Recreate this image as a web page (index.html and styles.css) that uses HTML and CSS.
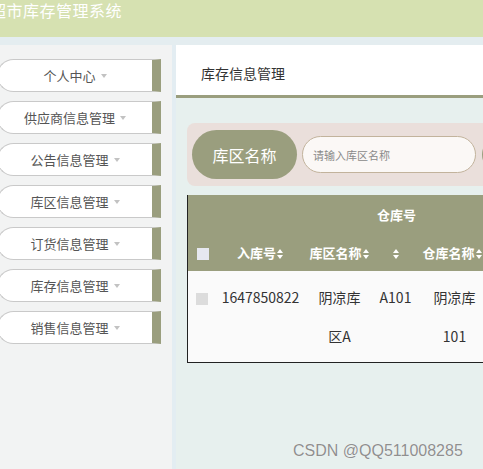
FILE: index.html
```html
<!DOCTYPE html>
<html lang="zh">
<head>
<meta charset="utf-8">
<title>超市库存管理系统</title>
<link rel="stylesheet" href="styles.css">
</head>
<body>
<header class="topbar"><span class="title">超市库存管理系统</span></header>
<div class="strip"></div>
<div class="main">
  <nav class="sidebar">
    <div class="nav-item"><span>个人中心</span><i class="caret"></i></div>
    <div class="nav-item"><span>供应商信息管理</span><i class="caret"></i></div>
    <div class="nav-item"><span>公告信息管理</span><i class="caret"></i></div>
    <div class="nav-item"><span>库区信息管理</span><i class="caret"></i></div>
    <div class="nav-item"><span>订货信息管理</span><i class="caret"></i></div>
    <div class="nav-item"><span>库存信息管理</span><i class="caret"></i></div>
    <div class="nav-item"><span>销售信息管理</span><i class="caret"></i></div>
  </nav>
  <div class="divider"></div>
  <section class="content">
    <div class="pagehead">库存信息管理</div>
    <div class="search">
      <div class="search-label">库区名称</div>
      <div class="search-input">请输入库区名称</div>
      <div class="search-next"></div>
    </div>
    <table class="grid">
      <colgroup>
        <col class="c0"><col class="c1"><col class="c2"><col class="c3"><col class="c4">
      </colgroup>
      <thead>
        <tr class="group"><th colspan="5"><span class="group-title">仓库号</span></th></tr>
        <tr class="cols">
          <th><span class="hcheck"></span></th>
          <th>入库号<i class="sort"></i></th>
          <th>库区名称<i class="sort"></i></th>
          <th><i class="sort"></i></th>
          <th class="left">仓库名称<i class="sort"></i></th>
        </tr>
      </thead>
      <tbody>
        <tr>
          <td><span class="dcheck"></span></td>
          <td>1647850822</td>
          <td><span class="wrap">阴凉库区A</span></td>
          <td>A101</td>
          <td><span class="wrap">阴凉库 101</span></td>
        </tr>
      </tbody>
    </table>
  </section>
</div>
<div class="watermark">CSDN @QQ511008285</div>
</body>
</html>
```
FILE: styles.css
```css
html, body {
  margin: 0;
  padding: 0;
}
body {
  width: 483px;
  height: 469px;
  overflow: hidden;
  position: relative;
  background: #e7f0ee;
  font-family: "Noto Sans CJK SC", "Noto Sans", sans-serif;
}
.topbar {
  height: 37px;
  background: #d6e1b1;
  overflow: hidden;
}
.title {
  display: block;
  margin-left: -10px;
  line-height: 20px;
  font-size: 16px;
  letter-spacing: 0.5px;
  color: #ffffff;
  white-space: nowrap;
}
.strip {
  height: 8px;
  background: #e4edf0;
}
.main {
  display: flex;
  height: 424px;
}
.sidebar {
  width: 172px;
  flex: none;
  background: #f2f3f3;
  padding-top: 14px;
  display: flex;
  flex-direction: column;
  gap: 9px;
  box-sizing: border-box;
}
.nav-item {
  height: 33px;
  box-sizing: border-box;
  margin-left: -3px;
  width: 164px;
  background: #ffffff;
  border: 1px solid #c9c9c9;
  border-right: 9px solid #9a9e7e;
  border-radius: 17px 0 0 17px;
  display: flex;
  align-items: center;
  justify-content: center;
  font-size: 13px;
  color: #555;
}
.caret {
  display: inline-block;
  margin-left: 5px;
  width: 0;
  height: 0;
  border-left: 3px solid transparent;
  border-right: 3px solid transparent;
  border-top: 4px solid #c2c2c2;
}
.divider {
  width: 4px;
  flex: none;
  background: #e3edf2;
}
.content {
  flex: 1;
  min-width: 0;
  overflow: hidden;
}
.pagehead {
  height: 53px;
  background: #ffffff;
  border-bottom: 3px solid #9a9e7e;
  padding-left: 25px;
  padding-top: 5px;
  box-sizing: border-box;
  display: flex;
  align-items: center;
  font-size: 14px;
  color: #333;
}
.search {
  margin: 25px 0 0 11px;
  height: 63px;
  background: #eadfdb;
  border-radius: 8px 0 0 8px;
  display: flex;
  align-items: center;
  padding-left: 5px;
  box-sizing: border-box;
  width: 320px;
}
.search-label {
  width: 105px;
  height: 49px;
  flex: none;
  border-radius: 25px;
  background: #9a9e7e;
  color: #ffffff;
  font-size: 16px;
  display: flex;
  align-items: center;
  justify-content: center;
}
.search-input {
  margin-left: 5px;
  width: 174px;
  height: 37px;
  flex: none;
  box-sizing: border-box;
  border: 1px solid #c2b39c;
  border-radius: 19px;
  background: #fbf8f6;
  color: #8a8a8a;
  font-size: 11px;
  padding-left: 10px;
  display: flex;
  align-items: center;
}
.search-next {
  margin-left: 6px;
  width: 20px;
  height: 37px;
  flex: none;
  border-radius: 19px 0 0 19px;
  background: #9a9e7e;
}
.grid {
  margin: 9px 0 0 11px;
  table-layout: fixed;
  border-collapse: collapse;
  width: 330px;
  background: #fafafa;
  border-left: 1px solid #222;
  border-bottom: 1px solid #222;
}
.c0 { width: 28px; }
.c1 { width: 90px; }
.c2 { width: 68px; }
.c3 { width: 44px; }
.c4 { width: 100px; }
.grid thead {
  background: #9a9e7e;
  color: #ffffff;
}
.grid th {
  height: 38px;
  padding: 0;
  font-size: 13px;
  font-weight: bold;
  text-align: center;
  white-space: nowrap;
}
.grid th.left {
  text-align: left;
  padding-left: 5px;
}
.group th {
  text-align: left;
}
.group-title {
  padding-left: 189px;
}
.sort {
  display: inline-block;
  position: relative;
  width: 7px;
  height: 10px;
  margin-left: 1px;
  vertical-align: -1px;
}
.sort::before, .sort::after {
  content: "";
  position: absolute;
  left: 0;
  border-left: 3.5px solid transparent;
  border-right: 3.5px solid transparent;
}
.sort::before {
  top: 0;
  border-bottom: 4px solid #ffffff;
}
.sort::after {
  bottom: 0;
  border-top: 4px solid #ffffff;
}
.hcheck, .dcheck {
  display: inline-block;
  width: 12px;
  height: 12px;
  vertical-align: middle;
}
.hcheck {
  background: #e6e8f0;
  margin-left: 2px;
}
.dcheck {
  background: #dcdcdc;
}
.grid td {
  padding: 7px 0 6px;
  font-size: 14px;
  line-height: 39px;
  color: #333;
  text-align: center;
  vertical-align: top;
}
.wrap {
  display: inline-block;
  width: 44px;
  word-break: break-all;
}
.grid td:last-child {
  text-align: left;
  padding-left: 15px;
}
.grid td:last-child .wrap {
  text-align: center;
  width: 44px;
}
.watermark {
  position: absolute;
  left: 293px;
  top: 442px;
  font-family: "Liberation Sans", Arial, sans-serif;
  font-size: 16px;
  color: #8f8f8f;
  text-shadow: 0 0 1px #ffffff;
  white-space: nowrap;
}
```
